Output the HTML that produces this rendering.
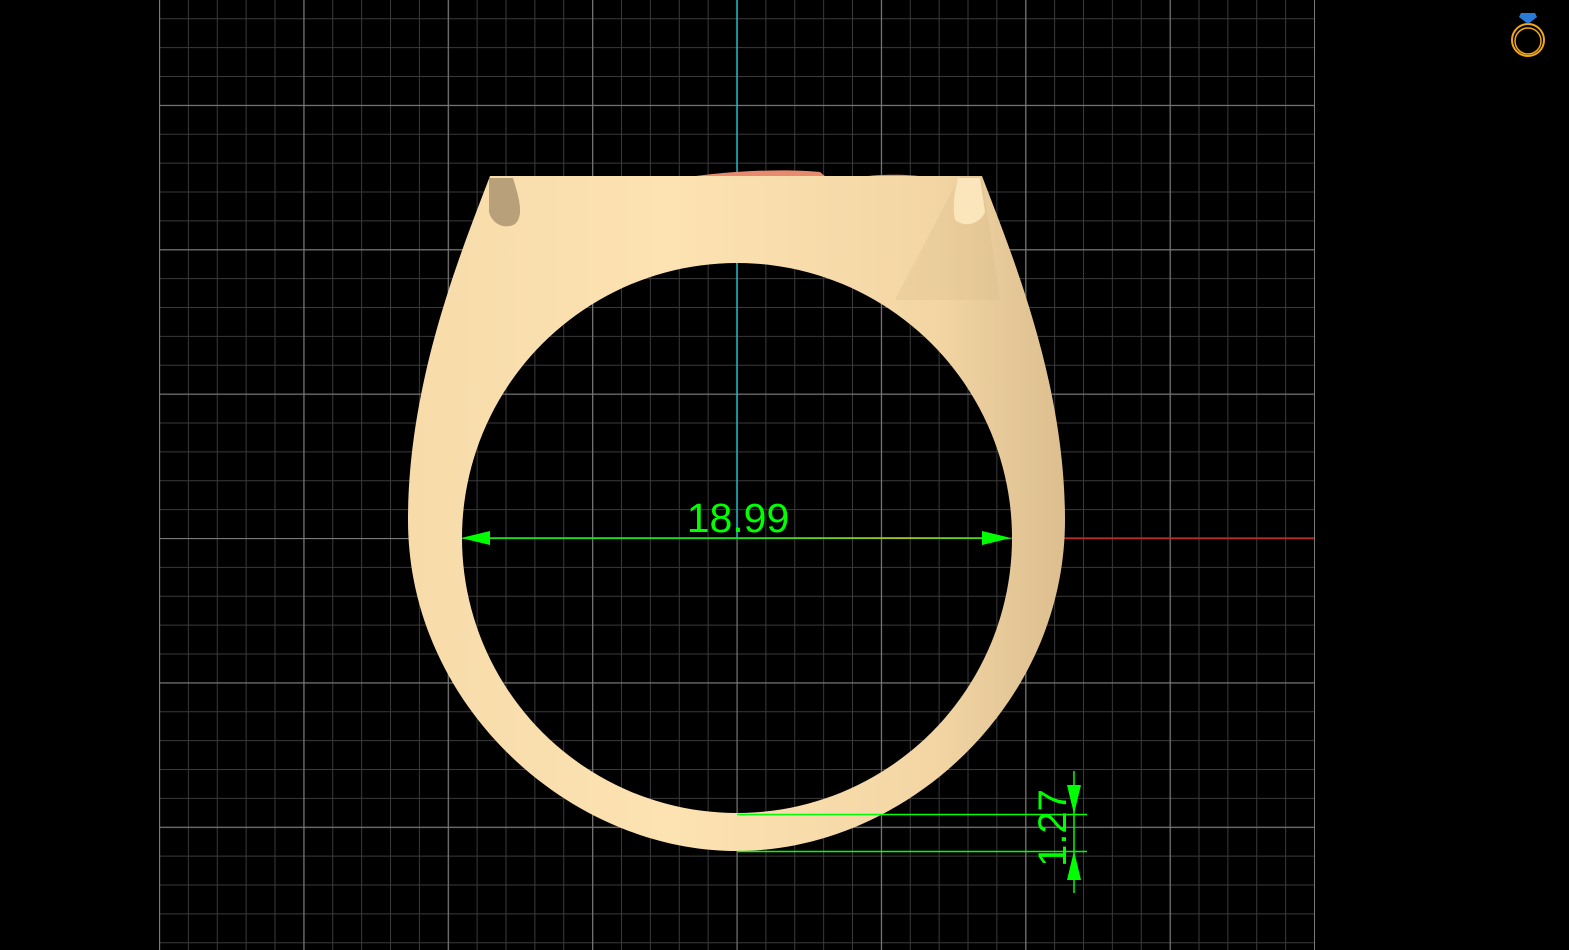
<!DOCTYPE html>
<html><head><meta charset="utf-8"><style>html,body{margin:0;padding:0;background:#000;overflow:hidden}svg{display:block}</style></head>
<body>
<svg width="1569" height="950" viewBox="0 0 1569 950" xmlns="http://www.w3.org/2000/svg">
<defs>
<pattern id="minor" x="159" y="538" width="28.875" height="28.875" patternUnits="userSpaceOnUse">
<path d="M0.5 0V28.875M0 0.5H28.875" stroke="#3a3a3a" stroke-width="1" fill="none"/>
</pattern>
<pattern id="major" x="159" y="538" width="144.375" height="144.375" patternUnits="userSpaceOnUse">
<path d="M0.5 0V144.375M0 0.5H144.375" stroke="#7a7a7a" stroke-width="1.3" fill="none"/>
</pattern>
<linearGradient id="gold" x1="0" y1="0" x2="1" y2="0">
<stop offset="0" stop-color="#f7dcaa"/>
<stop offset="0.4" stop-color="#fde2b2"/>
<stop offset="0.8" stop-color="#f3d6a4"/>
<stop offset="1" stop-color="#dcbe8f"/>
</linearGradient>
<linearGradient id="gy" x1="461" x2="1011" y1="0" y2="0" gradientUnits="userSpaceOnUse">
<stop offset="0" stop-color="#00ff00"/><stop offset="0.5" stop-color="#00ff00"/><stop offset="0.8" stop-color="#b8d800"/><stop offset="1" stop-color="#00ff00"/>
</linearGradient>
</defs>
<rect x="159" y="0" width="1156" height="950" fill="url(#minor)"/>
<rect x="159" y="0" width="1156" height="950" fill="url(#major)"/>
<line x1="737" y1="0" x2="737" y2="538" stroke="#1fb8c8" stroke-width="1.5"/>
<line x1="1011" y1="538" x2="1314" y2="538" stroke="#d01010" stroke-width="1.5"/>
<path d="M690 177 C720 172 780 168 820 172 L826 177Z M860 177 C880 174 910 174 925 177Z" fill="#e88a6e"/>
<path fill-rule="evenodd" fill="url(#gold)" d="M490,176 L982,176 C1010,250 1065,380 1065,520 C1065,705 905,851 737,851 C569,851 408,705 408,520 C408,380 462,250 490,176 Z M737,263 A275,275 0 1 0 737.01,263 Z"/>
<path d="M960 176 L895 300 L1000 300 L982 176Z" fill="#d8b988" opacity="0.25"/>
<path d="M489 178 L513 178 C518 195 525 215 515 224 C505 230 492 224 489 212Z" fill="#b8a07a"/>
<path d="M958 178 L980 178 L985 212 C980 224 965 228 955 220 C952 205 955 190 958 178Z" fill="#fbe6bb"/>
<line x1="470" y1="538" x2="1000" y2="538" stroke="url(#gy)" stroke-width="1.5"/>
<path d="M461 538 L490 531 L490 545Z" fill="#00ff00"/>
<path d="M1011 538 L982 531 L982 545Z" fill="#00ff00"/>
<text x="738" y="532" font-family="Liberation Sans, sans-serif" font-size="41" fill="#00ff00" text-anchor="middle">18.99</text>
<line x1="737" y1="814.5" x2="1087" y2="814.5" stroke="#00ff00" stroke-width="1.5"/>
<line x1="737" y1="851.5" x2="1087" y2="851.5" stroke="#00ff00" stroke-width="1.5"/>
<line x1="1074" y1="771" x2="1074" y2="893" stroke="#00ff00" stroke-width="1.5"/>
<path d="M1074 814 L1067 785 L1081 785Z" fill="#00ff00"/>
<path d="M1074 851 L1067 880 L1081 880Z" fill="#00ff00"/>
<text transform="translate(1066 828) rotate(-90)" font-family="Liberation Sans, sans-serif" font-size="40" fill="#00ff00" text-anchor="middle">1.27</text>
<g fill="none" stroke="#f0a818" stroke-width="2">
<circle cx="1528" cy="40" r="16"/>
<circle cx="1528" cy="41" r="13" stroke-width="1.5"/>
</g>
<path d="M1521 13 L1535 13 L1537 17 L1528 24 L1519 17Z" fill="#2a7ad8"/>
</svg>
</body></html>
